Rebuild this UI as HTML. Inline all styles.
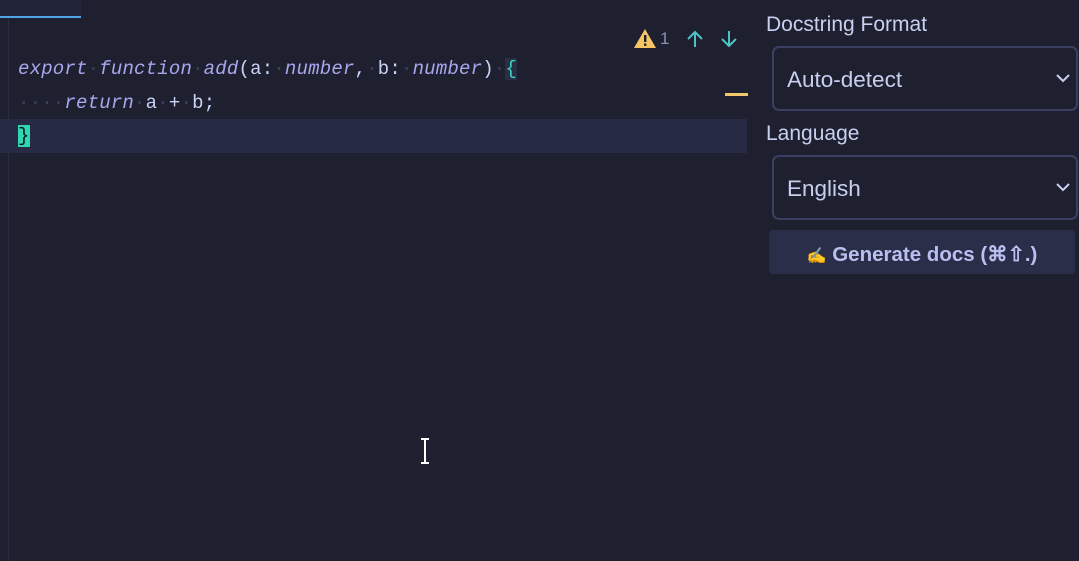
<!DOCTYPE html>
<html><head><meta charset="utf-8"><style>
body{margin:0;width:1079px;height:561px;background:#1e2030;overflow:hidden;position:relative;font-family:"Liberation Sans",sans-serif}
.tab{position:absolute;left:0;top:0;width:81px;height:16px;background:#222538;border-bottom:2px solid #4fa3e8}
.gut{position:absolute;left:8px;top:18px;width:1px;height:543px;background:#2a2d42}
.hl{position:absolute;left:0;top:119px;width:747px;height:34px;background:#262a42}
.code{position:absolute;left:18px;font-family:"Liberation Mono",monospace;font-size:19px;letter-spacing:0.2px;color:#c8d3f5;white-space:pre;line-height:34px}
.k{color:#a9a6ee;font-style:italic}
.d{color:#3a3f5a}
.br{color:#3ad3c4;background:#2a2f45}
.cur{background:#2fd6b6;color:#111}
.lbl{position:absolute;left:766px;color:#c8d0f0;font-size:21px}
.sel{position:absolute;left:772px;width:306px;height:65px;border:2px solid #3b3f62;border-radius:7px;box-sizing:border-box;color:#c8d0f0;font-size:22.5px;padding-left:13px;line-height:63px}
.sel svg{position:absolute;right:6px;top:25px}
.btn{position:absolute;left:769px;top:230px;width:306px;height:44px;background:#2a2e48;border-radius:4px;color:#b9c0f0;font-weight:bold;font-size:20.5px;text-align:center;line-height:50px}
</style></head><body>
<div class="tab"></div>
<div class="gut"></div>
<div class="hl"></div>
<div class="code" style="top:52px"><span class="k">export</span><span class="d">·</span><span class="k">function</span><span class="d">·</span><span class="k">add</span>(a:<span class="d">·</span><span class="k">number</span>,<span class="d">·</span>b:<span class="d">·</span><span class="k">number</span>)<span class="d">·</span><span class="br">{</span></div>
<div class="code" style="top:86px"><span class="d">····</span><span class="k">return</span><span class="d">·</span>a<span class="d">·</span>+<span class="d">·</span>b;</div>
<div class="code" style="top:119px"><span class="cur">}</span></div>
<div style="position:absolute;left:725px;top:93px;width:23px;height:3px;background:#f2c66d"></div>
<svg style="position:absolute;left:633px;top:28px" width="24" height="21"><path d="M12 1L23 20H1Z" fill="#f5c563"/><rect x="11" y="7" width="2.4" height="7" fill="#1e2030"/><rect x="11" y="15.5" width="2.4" height="2.4" fill="#1e2030"/></svg>
<div style="position:absolute;left:660px;top:29px;color:#8a90b5;font-size:17px">1</div>
<svg style="position:absolute;left:685px;top:29px" width="20" height="20" fill="none" stroke="#4fc2c8" stroke-width="2"><path d="M10 18V3M3 10l7-7 7 7"/></svg>
<svg style="position:absolute;left:719px;top:29px" width="20" height="20" fill="none" stroke="#4fc2c8" stroke-width="2"><path d="M10 2v15M3 10l7 7 7-7"/></svg>
<div class="lbl" style="top:13px">Docstring Format</div>
<div class="sel" style="top:46px">Auto-detect<svg width="14" height="10" fill="none" stroke="#c8d0f0" stroke-width="2"><path d="M1 2l6 6 6-6"/></svg></div>
<div class="lbl" style="top:122px">Language</div>
<div class="sel" style="top:155px">English<svg width="14" height="10" fill="none" stroke="#c8d0f0" stroke-width="2"><path d="M1 2l6 6 6-6"/></svg></div>
<div class="btn"><span style="color:#2fd6b6;font-weight:normal;font-size:16px">✍</span> Generate docs (⌘⇧.)</div>
<svg style="position:absolute;left:418px;top:437px" width="14" height="28" fill="none" stroke="#fff" stroke-width="2"><path d="M3 2h8M7 2v24M3 26h8"/></svg>
</body></html>
